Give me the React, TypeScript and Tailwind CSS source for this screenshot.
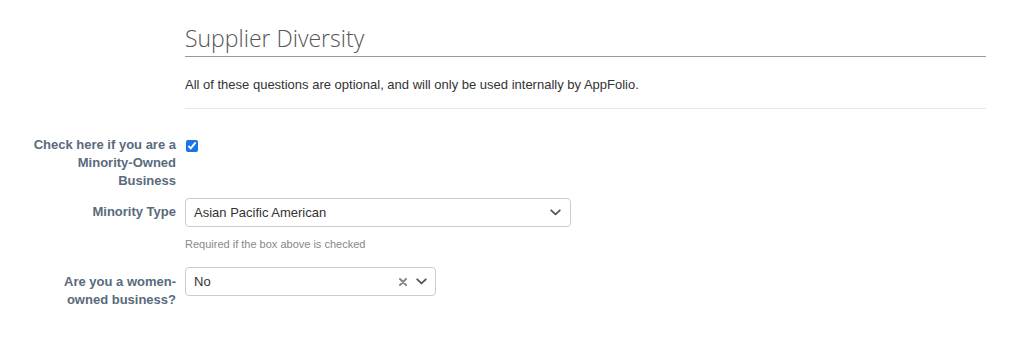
import React from "react";

const Chevron = () => (
  <svg width="11" height="7" viewBox="0 0 11 7" className="text-[#555]">
    <path d="M1.2 1.3 L5.5 5.3 L9.8 1.3" fill="none" stroke="currentColor" strokeWidth="1.8" strokeLinecap="round" strokeLinejoin="round" />
  </svg>
);

const Cross = () => (
  <svg width="8" height="8" viewBox="0 0 8 8" className="text-[#888]">
    <path d="M1 1 L7 7 M7 1 L1 7" fill="none" stroke="currentColor" strokeWidth="2" strokeLinecap="round" />
  </svg>
);

const App: React.FC = () => {
  const labelCls =
    "w-[176px] shrink-0 text-right text-[13px] leading-[18px] font-bold text-[#5a6a7d]";

  return (
    <div className="w-[1020px] h-[341px] bg-white font-['Liberation_Sans',Arial,sans-serif] text-[#333]">
      <div className="pl-[185px] pr-[34px] pt-[23px]">
        <h2 className="font-['Open_Sans',sans-serif] font-light text-[23px] leading-[30px] text-[#555] pb-[3px] border-b border-[#999]">
          Supplier Diversity
        </h2>
        <p className="text-[13px] leading-[18px] pt-[19px] pb-[14px] border-b border-[#e8e8e8]">
          All of these questions are optional, and will only be used internally by AppFolio.
        </p>
      </div>

      <div className="pt-[27px]">
        <div className="flex gap-[9px]">
          <div className={labelCls}>
            Check here if you are a<br />
            Minority-Owned<br />
            Business
          </div>
          <div className="pt-[4px] pl-[1px]">
            <input type="checkbox" defaultChecked className="block w-[12px] h-[12px] m-0 accent-[#1a73e8]" />
          </div>
        </div>

        <div className="flex gap-[9px] mt-[8px]">
          <div className={`${labelCls} pt-[5px]`}>Minority Type</div>
          <div>
            <div className="w-[386px] h-[29px] border border-[#ccc] rounded-[4px] flex items-center pl-[8px] pr-[9px]">
              <span className="flex-1 text-[13px]">Asian Pacific American</span>
              <Chevron />
            </div>
            <div className="text-[11px] leading-[14px] text-[#888] mt-[10px]">
              Required if the box above is checked
            </div>
          </div>
        </div>

        <div className="flex gap-[9px] mt-[16px]">
          <div className={`${labelCls} pt-[6px]`}>
            Are you a women-<br />
            owned business?
          </div>
          <div className="w-[251px] h-[29px] border border-[#ccc] rounded-[4px] flex items-center pl-[8px] pr-[8px]">
            <span className="flex-1 text-[13px]">No</span>
            <Cross />
            <span className="w-[9px]" />
            <Chevron />
          </div>
        </div>
      </div>
    </div>
  );
};

export default App;
